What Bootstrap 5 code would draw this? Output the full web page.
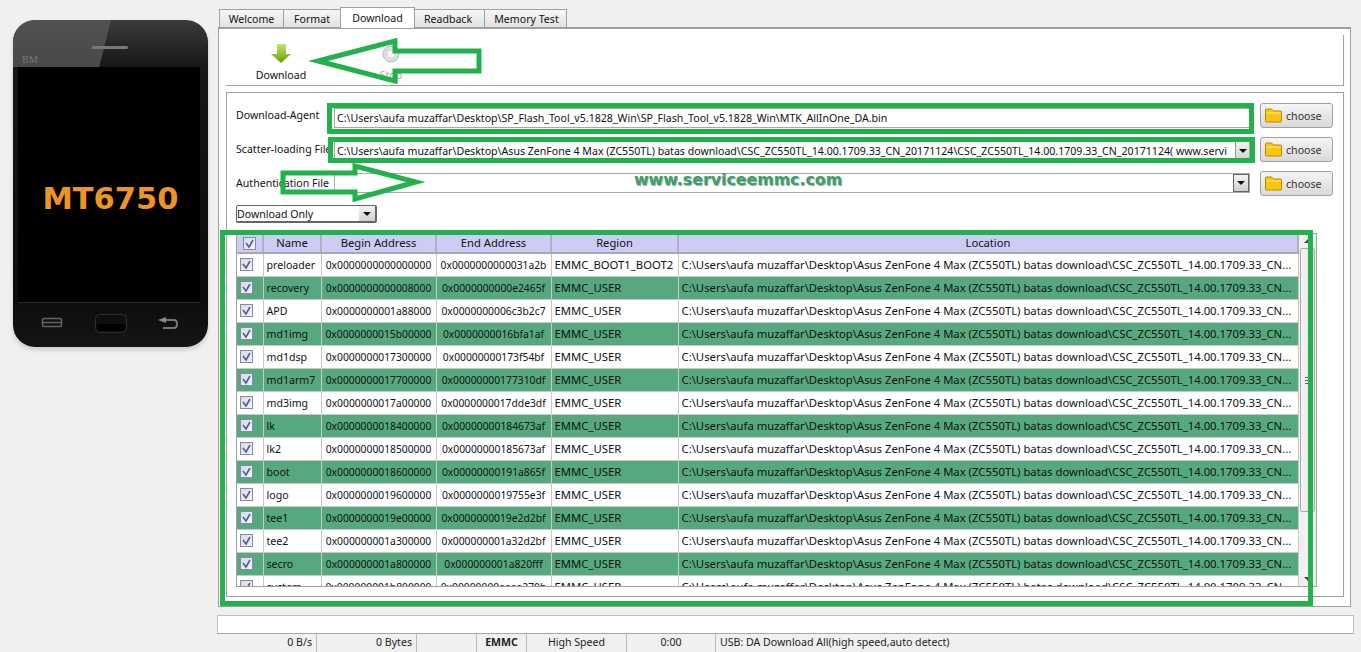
<!DOCTYPE html>
<html><head><meta charset="utf-8">
<link href="https://cdn.jsdelivr.net/npm/bootstrap@5.3.0/dist/css/bootstrap.min.css" rel="stylesheet">
<style>
html,body{height:652px;overflow:hidden}
body{background:#f0f0f0;font:10.6px/14px "Noto Sans",sans-serif;color:#111;position:relative}
.shell{height:652px}
.sidecol{width:218px;flex:none;padding:20px 0 0 13px}
.phone{width:195px;height:327px;background:linear-gradient(#3a3a3a,#171717 14%,#0c0c0c 85%,#151515);border-radius:22px;position:relative;overflow:hidden;box-shadow:0 3px 4px rgba(0,0,0,.15)}
.shine{position:absolute;left:0;top:0;width:98px;height:47px;background:#5a5a5a;clip-path:polygon(0 0,100% 0,88% 100%,0 100%);opacity:.75}
.speaker{position:absolute;left:79px;top:26px;width:36px;height:3px;border-radius:2px;background:#777}
.bm{position:absolute;left:9px;top:34px;font:10px "Liberation Serif",serif;color:#777}
.screen{position:absolute;left:5px;top:47px;width:182px;height:235px;background:#000;display:flex;align-items:center;justify-content:center;padding:27px 0 0 3px}
.chip{font:bold 30.5px "DejaVu Sans",sans-serif;color:#ee9424}
.softkeys{position:absolute;left:0;right:0;top:282px;height:45px}
.softkeys svg{position:absolute;left:0;top:0}
.maincol{width:1136px;flex:none}
.tabstrip{height:27px;padding:9px 0 0 1px}
.tabby{height:18px;border:1px solid #a0a0a0;border-bottom:0;background:linear-gradient(#f6f6f6,#e2e2e2);padding:2px 0 0;text-align:center;margin-right:-1px;flex:none}
.tabw1{width:65px}.tabw2{width:58px}.tabw3{width:75px}.tabw4{width:71px;padding-right:3px}.tabw5{width:83px;padding-left:2px}
.tabon{height:21px;margin-top:-2px;background:#fff;padding-top:3px;position:relative;z-index:1}
.pane{height:580px;width:1133px;background:#fff;border:1px solid #a0a0a0;border-top:2px solid #a0a0a0;padding:6px 7px 7px}
.tools{height:51px;border-bottom:1px solid #a0a0a0;border-right:1px solid #a0a0a0;padding-left:23px;gap:58px;width:1118px}
.toolitem{width:64px;text-align:center;padding-top:9px}
.toolitem svg{display:block;margin:0 auto 4px}
.faded{color:#aaa;width:40px}
.frame{border:1px solid #a0a0a0;height:505px;margin-top:6px;width:1118px;padding:5px 9px 0;position:relative}
.rowline{height:34px;align-items:center}
.lbl{width:98px;flex:none;white-space:nowrap}
.fieldbox{width:916px;height:20px;border:1px solid #a8a8a8;background:#fff;padding:2px 2px;white-space:nowrap;overflow:hidden;position:relative;margin-right:10px;flex:none;align-self:flex-start}
.fld1{margin-top:10px}.fld2{margin-top:9px}.fld3{margin-top:7px}
.dropbtn{position:absolute;right:0;top:0;bottom:0;width:14px;background:linear-gradient(#f4f4f4,#d0d0d0);border-left:1px solid #999;display:flex;align-items:center;justify-content:center}
.fld3 .dropbtn{border:1px solid #666;width:16px}
.dropbtn i{display:block;border:4px solid transparent;border-top:4px solid #111;border-bottom:0}
.pickbtn{width:73px;height:25px;margin-top:1px;border:1px solid #a0a0a0;border-radius:3px;background:linear-gradient(#f5f5f5,#d9d9d9);display:flex;align-items:center;padding:0 4px;gap:4px;flex:none;color:#333}
.minisel{width:141px;height:18px;border:1px solid #666;border-right-width:2px;border-bottom-width:2px;border-radius:2px;background:#fff;margin-top:5px;position:relative;line-height:17px}
.minisel .dropbtn{width:16px;border-left:0}
.grid-wrap{position:absolute;left:9px;top:140px;width:1081px;height:354px;border:1px solid #a0a0a0;overflow:hidden;background:#fff}
.datagrid{table-layout:fixed;border-collapse:collapse;width:1062px;line-height:14px}
.datagrid th{background:#ccccf5;font-weight:400;font-size:11.2px;text-align:center;height:19px;padding:0;border-right:2px solid #b0b0b8;border-bottom:2px solid #a8a8b0}
.datagrid td{height:23px;padding:0 3px;border-right:1px solid #c8c8c8;border-bottom:1px solid #c8c8c8;white-space:nowrap;overflow:hidden;background:#fff}
.datagrid tr.alt td{background:#56a97f;color:#111}
.tick{display:block;width:13px;height:13px;border:1px solid #8a8a9a;background:linear-gradient(135deg,#d8d8e8,#f4f4fa);margin:0 auto}
.datagrid td.cbx{padding:0}
.datagrid td.cbx .tick{margin-left:3px}
.datagrid td.addr{text-align:center;font-size:10.3px}
.datagrid td.wider{font-size:11.3px}
.vscroll{position:absolute;right:0;top:0;width:17px;height:100%;background:#f0f0f0}
.vthumb{position:absolute;left:1px;right:1px;top:14px;height:264px;background:linear-gradient(90deg,#f5f5f5,#dedede);border:1px solid #aaa;border-radius:2px}
.grip{position:absolute;left:4px;right:4px;top:128px;height:7px;border-top:1px solid #666;border-bottom:1px solid #666}
.grip::after{content:"";display:block;margin-top:2px;border-top:1px solid #666}
.caret-up,.caret-down{position:absolute;left:5px;border:4px solid transparent}
.caret-up{top:0;border-bottom:4px solid #444;border-top:0;margin-top:5px}
.caret-down{bottom:5px;border-top:4px solid #444;border-bottom:0}
.progbar{height:19px;width:1137px;margin:8px 0 0 -1px;background:#fff;border:1px solid #c0c0c0;border-bottom-color:#aaa}
.statusline{height:18px;margin-left:-1px;color:#222;line-height:17px}
.cellbox{border-right:1px solid #bbb;height:18px;white-space:nowrap;flex:none;padding:0 4px}
.cellbox:last-child{border-right:0}
.cellw1{width:100px}.cellw2{width:60px}.cellw3{width:50px}.cellw4{width:89px}
.annot{position:absolute;pointer-events:none}
.boxg{border:5px solid #22b14c}
.wmark{position:absolute;left:634px;top:170px;font:bold 15.8px "DejaVu Sans",sans-serif;color:#3aa265;text-shadow:1px 1px 0 rgba(90,90,90,.55)}
</style></head>
<body>
<div class="shell d-flex">
 <div class="sidecol">
  <div class="phone">
   <div class="shine"></div><div class="speaker"></div><div class="bm">BM</div>
   <div class="screen"><span class="chip">MT6750</span></div>
   <div class="softkeys">
    <svg width="195" height="45" viewBox="0 0 195 45" fill="none">
     <line x1="5" y1="0" x2="187" y2="0" stroke="#333" stroke-width="1.5"/>
     <rect x="29.5" y="16.5" width="19" height="8" rx="1.5" stroke="#666" stroke-width="1.5"/>
     <line x1="30" y1="20.5" x2="48" y2="20.5" stroke="#666" stroke-width="1.5"/>
     <rect x="82.5" y="12.5" width="31" height="18" rx="4" fill="#0f0f0f" stroke="#2e2e2e"/>
     <rect x="84" y="22" width="28" height="7" rx="3" fill="#000"/>
     <path d="M150 18h11c4 0 4 8 0 8h-11" stroke="#777" stroke-width="2"/>
     <path d="M145 18l8-3v6z" fill="#888"/>
    </svg>
   </div>
  </div>
 </div>
 <div class="maincol">
  <div class="tabstrip d-flex align-items-start">
   <div class="tabby tabw1">Welcome</div><div class="tabby tabw2">Format</div><div class="tabby tabw3 tabon">Download</div><div class="tabby tabw4">Readback</div><div class="tabby tabw5">Memory Test</div>
  </div>
  <div class="pane">
   <div class="tools d-flex">
    <div class="toolitem"><svg width="20" height="20" viewBox="0 0 20 20"><defs><linearGradient id="dlg" x1="0" y1="0" x2="0" y2="1"><stop offset="0" stop-color="#c4e66a"/><stop offset="1" stop-color="#62a000"/></linearGradient></defs><path d="M6 0h9v10h5L10 19 0 10h6z" fill="url(#dlg)"/></svg>Download</div>
    <div class="toolitem faded"><svg width="18" height="20" viewBox="0 0 18 20"><circle cx="9" cy="10" r="8" fill="#ddd" stroke="#bbb"/><rect x="6" y="7" width="6" height="6" fill="#f7f7f7"/></svg>Stop</div>
   </div>
   <div class="frame">
    <div class="rowline d-flex"><div class="lbl">Download-Agent</div><div class="fieldbox fld1">C:\Users\aufa muzaffar\Desktop\SP_Flash_Tool_v5.1828_Win\SP_Flash_Tool_v5.1828_Win\MTK_AllInOne_DA.bin</div><div class="pickbtn"><svg width="17" height="15" viewBox="0 0 17 15"><path d="M.5 2q0-1 1-1h5l2 2h7q1 0 1 1v9q0 1-1 1h-14q-1 0-1-1z" fill="#f9c60c" stroke="#b78b00"/><path d="M1 5h15" stroke="#ffe680"/></svg>choose</div></div>
    <div class="rowline d-flex"><div class="lbl">Scatter-loading File</div><div class="fieldbox fld2">C:\Users\aufa muzaffar\Desktop\Asus ZenFone 4 Max (ZC550TL) batas download\CSC_ZC550TL_14.00.1709.33_CN_20171124\CSC_ZC550TL_14.00.1709.33_CN_20171124( www.servi<span class="dropbtn"><i></i></span></div><div class="pickbtn"><svg width="17" height="15" viewBox="0 0 17 15"><path d="M.5 2q0-1 1-1h5l2 2h7q1 0 1 1v9q0 1-1 1h-14q-1 0-1-1z" fill="#f9c60c" stroke="#b78b00"/><path d="M1 5h15" stroke="#ffe680"/></svg>choose</div></div>
    <div class="rowline d-flex"><div class="lbl">Authentication File</div><div class="fieldbox fld3"><span class="dropbtn"><i></i></span></div><div class="pickbtn"><svg width="17" height="15" viewBox="0 0 17 15"><path d="M.5 2q0-1 1-1h5l2 2h7q1 0 1 1v9q0 1-1 1h-14q-1 0-1-1z" fill="#f9c60c" stroke="#b78b00"/><path d="M1 5h15" stroke="#ffe680"/></svg>choose</div></div>
    <div class="minisel">Download Only<span class="dropbtn"><i></i></span></div>
    <div class="grid-wrap">
     <table class="datagrid">
      <colgroup><col style="width:26px"><col style="width:58px"><col style="width:115px"><col style="width:115px"><col style="width:127px"><col></colgroup>
      <thead><tr><th><span class="tick"><svg width="11" height="11" viewBox="0 0 11 11" class="d-block"><path d="M2 5l3 4 4-7" fill="none" stroke="#4a5fa5" stroke-width="1.6"/></svg></span></th><th>Name</th><th>Begin Address</th><th>End Address</th><th>Region</th><th>Location</th></tr></thead>
      <tbody id="rows"></tbody>
     </table>
     <div class="vscroll"><span class="caret-up"></span><div class="vthumb"><div class="grip"></div></div><span class="caret-down"></span></div>
    </div>
   </div>
  </div>
  <div class="progbar"></div>
  <div class="statusline d-flex">
   <div class="cellbox cellw1 text-end">0 B/s</div><div class="cellbox cellw1 text-end">0 Bytes</div><div class="cellbox cellw2"></div><div class="cellbox cellw3 text-center fw-bold">EMMC</div><div class="cellbox cellw1 text-center">High Speed</div><div class="cellbox cellw4 text-center">0:00</div><div class="cellbox">USB: DA Download All(high speed,auto detect)</div>
  </div>
 </div>
</div>
<div class="wmark">www.serviceemmc.com</div>
<div class="annot boxg" style="left:327px;top:103px;width:927px;height:31px"></div>
<div class="annot boxg" style="left:328px;top:137px;width:927px;height:26px"></div>
<div class="annot boxg" style="left:220px;top:230px;width:1093px;height:376px"></div>
<svg class="annot" style="left:0;top:0" width="1361" height="652" fill="none" stroke="#22b14c" stroke-width="5">
 <path d="M318 61L395 41V51H479V71H395V81Z"/>
 <path d="M283 173H355V166L416 182L355 199V192H283Z"/>
</svg>
<script>
var d=[["preloader","0x0000000000000000","0x0000000000031a2b","EMMC_BOOT1_BOOT2"],["recovery","0x0000000000008000","0x0000000000e2465f"],["APD","0x0000000001a88000","0x0000000006c3b2c7"],["md1img","0x0000000015b00000","0x0000000016bfa1af"],["md1dsp","0x0000000017300000","0x00000000173f54bf"],["md1arm7","0x0000000017700000","0x00000000177310df"],["md3img","0x0000000017a00000","0x0000000017dde3df"],["lk","0x0000000018400000","0x00000000184673af"],["lk2","0x0000000018500000","0x00000000185673af"],["boot","0x0000000018600000","0x00000000191a865f"],["logo","0x0000000019600000","0x0000000019755e3f"],["tee1","0x0000000019e00000","0x0000000019e2d2bf"],["tee2","0x000000001a300000","0x000000001a32d2bf"],["secro","0x000000001a800000","0x000000001a820fff"],["system","0x000000001b800000","0x00000000aaaa270b"]];
var loc="C:\\Users\\aufa muzaffar\\Desktop\\Asus ZenFone 4 Max (ZC550TL) batas download\\CSC_ZC550TL_14.00.1709.33_CN...";
var tick='<span class="tick"><svg width="11" height="11" viewBox="0 0 11 11" class="d-block"><path d="M2 5l3 4 4-7" fill="none" stroke="#4a5fa5" stroke-width="1.6"/></svg></span>';
document.getElementById("rows").innerHTML=d.map(function(r,i){return '<tr class="'+(i%2?'alt':'')+'"><td class="cbx">'+tick+'</td><td>'+r[0]+'</td><td class="addr">'+r[1]+'</td><td class="addr">'+r[2]+'</td><td class="wider">'+(r[3]||"EMMC_USER")+'</td><td class="wider">'+loc+'</td></tr>'}).join("");
</script>
<script src="https://cdn.jsdelivr.net/npm/bootstrap@5.3.0/dist/js/bootstrap.bundle.min.js"></script>
</body></html>
